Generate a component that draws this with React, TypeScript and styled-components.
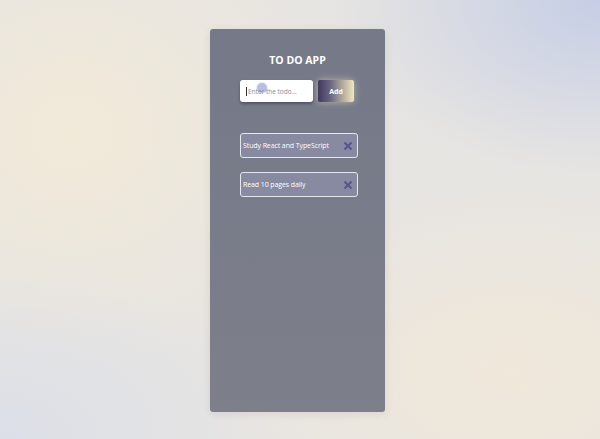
import React from "react";
import styled, { createGlobalStyle } from "styled-components";

const Global = createGlobalStyle`
  html, body { margin: 0; padding: 0; height: 100%; }
  body {
    font-family: "Open Sans", "Noto Sans", sans-serif;
    background:
      radial-gradient(ellipse 45% 40% at 100% 0%, #c6cee6 0%, rgba(198,206,230,0) 100%),
      radial-gradient(ellipse 45% 40% at 0% 100%, #dcdfe8 0%, rgba(220,223,232,0) 100%),
      radial-gradient(ellipse 45% 55% at 12% 30%, #f2ead9 0%, rgba(242,234,217,0) 100%),
      radial-gradient(ellipse 50% 45% at 85% 85%, #f0e8da 0%, rgba(240,232,218,0) 100%),
      #e7e5e2;
    overflow: hidden;
  }
`;

const Page = styled.div`
  width: 600px;
  height: 439px;
  display: flex;
  justify-content: center;
  padding-top: 29px;
  box-sizing: border-box;
`;

const Panel = styled.div`
  width: 175px;
  height: 383px;
  margin-left: -5px;
  box-sizing: border-box;
  background: linear-gradient(180deg, #757988 0%, #7d7f8a 100%);
  border-radius: 3px;
  box-shadow: 0 2px 10px rgba(0, 0, 0, 0.08);
  padding: 23px 0 0 30px;
  display: flex;
  flex-direction: column;
`;

const Title = styled.h1`
  margin: 0;
  width: 115px;
  text-align: center;
  font-size: 10.5px;
  line-height: 16px;
  font-weight: 700;
  color: #ffffff;
`;

const InputRow = styled.div`
  display: flex;
  gap: 5px;
  margin-top: 12px;
  height: 22px;
`;

const InputBox = styled.div`
  position: relative;
  width: 73px;
  height: 22px;
  background: #ffffff;
  border-radius: 3px;
  box-shadow: 0 2px 3px rgba(40, 40, 60, 0.45);
  display: flex;
  align-items: center;
  padding-left: 6px;
  box-sizing: border-box;
`;

const Caret = styled.span`
  width: 1px;
  height: 9px;
  background: #333;
  margin-right: 1px;
`;

const Placeholder = styled.span`
  font-size: 6.5px;
  color: #8a8a92;
`;

const ClickMark = styled.span`
  position: absolute;
  left: 17px;
  top: 3px;
  width: 10px;
  height: 10px;
  border-radius: 50%;
  background: rgba(120, 140, 200, 0.55);
  box-shadow: 0 0 2px rgba(120, 140, 200, 0.6);
`;

const AddButton = styled.button`
  width: 36px;
  height: 22px;
  border: none;
  border-radius: 2px;
  padding: 0;
  background: linear-gradient(90deg, #3f3a5e 0%, #6c6682 35%, #b6ae9e 70%, #f2e6c4 100%);
  color: #ffffff;
  font-family: inherit;
  font-size: 7px;
  font-weight: 700;
  box-shadow: 0 0 7px rgba(243, 230, 190, 0.55);
`;

const List = styled.ul`
  list-style: none;
  margin: 31px 0 0;
  padding: 0;
  display: flex;
  flex-direction: column;
  gap: 14px;
`;

const Item = styled.li`
  width: 118px;
  height: 25px;
  box-sizing: border-box;
  border: 1.5px solid #e6e6ee;
  border-radius: 3px;
  background: #878aa0;
  display: flex;
  align-items: center;
  justify-content: space-between;
  padding: 0 4px 0 2px;
`;

const ItemText = styled.span`
  font-size: 7px;
  color: #ffffff;
  letter-spacing: -0.1px;
`;

const Remove = styled.span`
  display: flex;
  color: #58548f;
`;

const todos = ["Study React and TypeScript", "Read 10 pages daily"];

export default function App() {
  return (
    <>
      <Global />
      <Page>
        <Panel>
          <Title>TO DO APP</Title>
          <InputRow>
            <InputBox>
              <Caret />
              <Placeholder>Enter the todo...</Placeholder>
              <ClickMark />
            </InputBox>
            <AddButton>Add</AddButton>
          </InputRow>
          <List>
            {todos.map((t) => (
              <Item key={t}>
                <ItemText>{t}</ItemText>
                <Remove>
                  <svg width="10" height="10" viewBox="0 0 10 10">
                    <path d="M1.5 1.5 L8.5 8.5 M8.5 1.5 L1.5 8.5" stroke="currentColor" strokeWidth="2" strokeLinecap="butt" />
                  </svg>
                </Remove>
              </Item>
            ))}
          </List>
        </Panel>
      </Page>
    </>
  );
}
